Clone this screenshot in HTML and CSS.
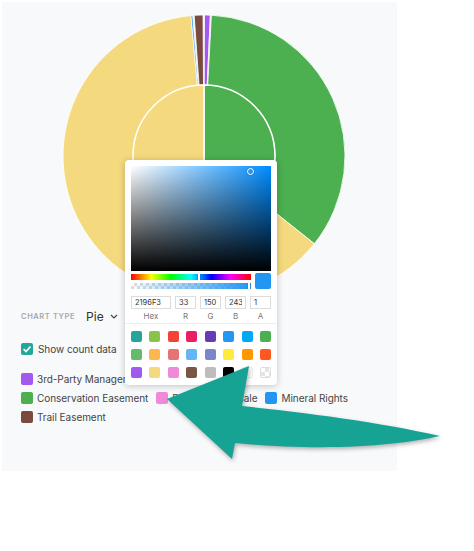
FILE: index.html
```html
<!DOCTYPE html>
<html lang="en">

<head>
    <meta charset="UTF-8">
    <meta name="viewport" content="width=device-width, initial-scale=1.0">
    <title>Chart Colour Picker</title>
    <link rel="stylesheet" href="styles.css">
</head>

<body>
    <div class="page">
        <div class="panel">
            <!-- Nested pie: inner two groups, outer ring by type -->
            <svg class="chart" width="395" height="300" viewBox="0 0 395 300">
                <g class="slices">
                    <path fill="#a259f0" d="M202.49,13 A141,141 0 0 1 208.40,13.15 L205.22,83.07 A71,71 0 0 0 202.25,83 Z" />
                    <path fill="#f08ad8" d="M208.40,13.15 A141,141 0 0 1 209.38,13.19 L205.72,83.10 A71,71 0 0 0 205.22,83.07 Z" />
                    <path fill="#4caf50" d="M209.38,13.19 A141,141 0 0 1 312.35,241.77 L257.57,198.20 A71,71 0 0 0 205.72,83.10 Z" />
                    <path fill="#f5d97e" d="M312.35,241.77 A141,141 0 1 1 188.98,13.60 L195.44,83.30 A71,71 0 1 0 257.57,198.20 Z" />
                    <path fill="#2196f3" d="M188.98,13.60 A141,141 0 0 1 190.69,13.45 L196.31,83.23 A71,71 0 0 0 195.44,83.30 Z" />
                    <path fill="#7b4a3e" d="M192.16,13.34 A141,141 0 0 1 201.02,13 L201.50,83 A71,71 0 0 0 197.05,83.17 Z" />
                </g>
                <g class="inner">
                    <path fill="#4caf50" d="M202,154 L202,83 A71,71 0 0 1 202,225 Z" />
                    <path fill="#f5d97e" d="M202,154 L202,225 A71,71 0 0 1 202,83 Z" />
                </g>
            </svg>

            <div class="controls">
                <div class="chart-type">
                    <span class="label">CHART TYPE</span>
                    <span class="select">Pie
                        <svg width="8" height="5" viewBox="0 0 8 5"><polyline points="1,1 4,4 7,1" /></svg>
                    </span>
                </div>

                <label class="check">
                    <span class="box">
                        <svg width="12" height="12" viewBox="0 0 12 12"><polyline points="2.6,6.2 5,8.5 9.4,3.6" /></svg>
                    </span>
                    Show count data
                </label>

                <div class="legend">
                    <div class="legend-row">
                        <span class="item"><i class="sw purple"></i>3rd-Party Management</span>
                        <span class="item"><i class="sw blue"></i>Access Easement</span>
                    </div>
                    <div class="legend-row">
                        <span class="item"><i class="sw green"></i>Conservation Easement</span>
                        <span class="item"><i class="sw pink"></i>Fee Simple Resale</span>
                        <span class="item"><i class="sw blue"></i>Mineral Rights</span>
                    </div>
                    <div class="legend-row">
                        <span class="item"><i class="sw brown"></i>Trail Easement</span>
                    </div>
                </div>
            </div>

            <!-- Colour picker popover -->
            <div class="picker">
                <div class="picker-main">
                    <div class="sat"><span class="sat-knob"></span></div>
                    <div class="sliders">
                        <div class="bars">
                            <div class="hue"><span class="knob hue-knob"></span></div>
                            <div class="alpha"><span class="knob alpha-knob"></span></div>
                        </div>
                        <div class="preview"></div>
                    </div>
                    <div class="fields">
                        <div class="field hex"><input type="text" value="2196F3"><span>Hex</span></div>
                        <div class="field"><input type="text" value="33"><span>R</span></div>
                        <div class="field"><input type="text" value="150"><span>G</span></div>
                        <div class="field"><input type="text" value="243"><span>B</span></div>
                        <div class="field"><input type="text" value="1"><span>A</span></div>
                    </div>
                </div>
                <div class="swatches">
                    <i style="background:#26a69a"></i>
                    <i style="background:#8bc34a"></i>
                    <i style="background:#f44336"></i>
                    <i style="background:#e91e63"></i>
                    <i style="background:#673ab7"></i>
                    <i style="background:#2196f3"></i>
                    <i style="background:#03a9f4"></i>
                    <i style="background:#4caf50"></i>
                    <i style="background:#66bb6a"></i>
                    <i style="background:#ffb74d"></i>
                    <i style="background:#e57373"></i>
                    <i style="background:#64b5f6"></i>
                    <i style="background:#7986cb"></i>
                    <i style="background:#ffeb3b"></i>
                    <i style="background:#ff9800"></i>
                    <i style="background:#ff5722"></i>
                    <i style="background:#a259f0"></i>
                    <i style="background:#f5d97e"></i>
                    <i style="background:#f08ad8"></i>
                    <i style="background:#795548"></i>
                    <i style="background:#bdbdbd"></i>
                    <i style="background:#000000"></i>
                    <i class="white"></i>
                    <i class="clear"></i>
                </div>
            </div>
        </div>

        <!-- Annotation arrow -->
        <svg class="arrow" width="474" height="551" viewBox="0 0 474 551">
            <path d="M167,397 L249,364 L242,404 C300,410 380,420 440,434 C400,443 330,450 235,441 L232,457 Z" />
        </svg>
    </div>
</body>

</html>
```

FILE: styles.css
```css
body {
    margin: 0;
    background: #fff;
    font-family: Inter, "Noto Sans", sans-serif;
}

.page {
    position: relative;
    width: 474px;
    height: 551px;
}

.panel {
    position: relative;
    margin: 2px 0 0 2px;
    width: 395px;
    height: 469px;
    background: #f8f9fa;
}

.chart {
    display: block;
}

.slices path {
    stroke: #fff;
    stroke-width: 0.8;
}

.inner path {
    stroke: #fff;
    stroke-width: 1.5;
}

.controls {
    padding: 0 19px;
}

.chart-type {
    display: flex;
    align-items: center;
    height: 16px;
    margin-top: 6px;
}

.chart-type .label {
    font-size: 7.5px;
    font-weight: 600;
    letter-spacing: 0.6px;
    color: #a3a7ab;
    margin-right: 11px;
}

.select {
    display: flex;
    align-items: center;
    gap: 6px;
    font-size: 12px;
    color: #333;
}

.select polyline {
    fill: none;
    stroke: #444;
    stroke-width: 1.2;
}

.check {
    display: flex;
    align-items: center;
    gap: 5px;
    height: 14px;
    margin-top: 18px;
    font-size: 10px;
    letter-spacing: -0.05px;
    color: #444;
}

.box {
    display: block;
    width: 12px;
    height: 12px;
    border-radius: 2px;
    background: #26a69a;
}

.box svg {
    display: block;
}

.box polyline {
    fill: none;
    stroke: #fff;
    stroke-width: 1.6;
}

.legend {
    margin-top: 15px;
    display: flex;
    flex-direction: column;
    gap: 4px;
}

.legend-row {
    display: flex;
    gap: 8px;
    height: 15px;
    align-items: center;
}

.item {
    display: flex;
    align-items: center;
    gap: 4px;
    font-size: 10px;
    letter-spacing: -0.05px;
    color: #444;
    white-space: nowrap;
}

.sw {
    display: block;
    width: 12px;
    height: 12px;
    border-radius: 2px;
}

.purple { background: #a259f0; }
.green { background: #4caf50; }
.pink { background: #f08ad8; }
.blue { background: #2196f3; }
.brown { background: #7b4a3e; }

/* picker */
.picker {
    position: absolute;
    left: 123px;
    top: 158px;
    width: 152px;
    background: #fff;
    border-radius: 4px;
    box-shadow: 0 1px 7px rgba(0, 0, 0, 0.22);
}

.picker-main {
    padding: 6px 6px 2px;
}

.sat {
    position: relative;
    height: 105px;
    background: linear-gradient(to top, #000, rgba(0, 0, 0, 0)),
        linear-gradient(to right, #fff, hsl(207, 100%, 50%));
}

.sat-knob {
    position: absolute;
    left: 116px;
    top: 2px;
    width: 5px;
    height: 5px;
    border: 1.5px solid #fff;
    border-radius: 50%;
    box-shadow: 0 0 1px rgba(0, 0, 0, 0.5);
}

.sliders {
    display: flex;
    gap: 4px;
    margin-top: 2px;
}

.bars {
    flex: 1;
    display: flex;
    flex-direction: column;
    gap: 3px;
    padding-top: 1px;
}

.hue,
.alpha {
    position: relative;
    height: 6px;
}

.hue {
    background: linear-gradient(to right, #f00 0%, #ff0 17%, #0f0 33%, #0ff 50%, #00f 67%, #f0f 83%, #f00 100%);
}

.alpha {
    background: linear-gradient(to right, rgba(33, 150, 243, 0), #2196f3),
        repeating-conic-gradient(#dcdcdc 0 25%, #fff 0 50%) 0 0 / 6px 6px;
}

.knob {
    position: absolute;
    top: -1px;
    width: 2px;
    height: 8px;
    background: #fff;
    box-shadow: 0 0 1px rgba(0, 0, 0, 0.6);
}

.hue-knob {
    left: 67px;
}

.alpha-knob {
    right: 1px;
}

.preview {
    width: 16px;
    height: 16px;
    border-radius: 2px;
    background: #2196f3;
}

.fields {
    display: flex;
    gap: 4px;
    margin-top: 7px;
}

.field {
    flex: 1;
    display: flex;
    flex-direction: column;
    align-items: center;
    min-width: 0;
}

.field.hex {
    flex: 0 0 40px;
}

.field input {
    width: 100%;
    height: 13px;
    box-sizing: border-box;
    border: 1px solid #dcdcdc;
    padding: 0 3px;
    margin: 0;
    font-family: Inter, sans-serif;
    font-size: 7.5px;
    color: #333;
    outline: none;
}

.field span {
    margin-top: 2px;
    font-size: 8px;
    line-height: 10px;
    color: #777;
}

.swatches {
    border-top: 1px solid #eee;
    padding: 7px 6px 7px;
    display: grid;
    grid-template-columns: repeat(8, 11px);
    justify-content: space-between;
    row-gap: 7px;
}

.swatches i {
    display: block;
    width: 11px;
    height: 11px;
    border-radius: 2px;
    box-sizing: border-box;
}

.swatches .white {
    background: #fff;
    border: 1px solid #eee;
}

.swatches .clear {
    border: 1px solid #ddd;
    background: repeating-conic-gradient(#e4e4e4 0 25%, #fff 0 50%) 0 0 / 8px 8px;
}

.arrow {
    position: absolute;
    left: 0;
    top: 0;
    pointer-events: none;
}

.arrow path {
    fill: #17a394;
    filter: drop-shadow(1px 2px 2px rgba(0, 0, 0, 0.3));
}
```
